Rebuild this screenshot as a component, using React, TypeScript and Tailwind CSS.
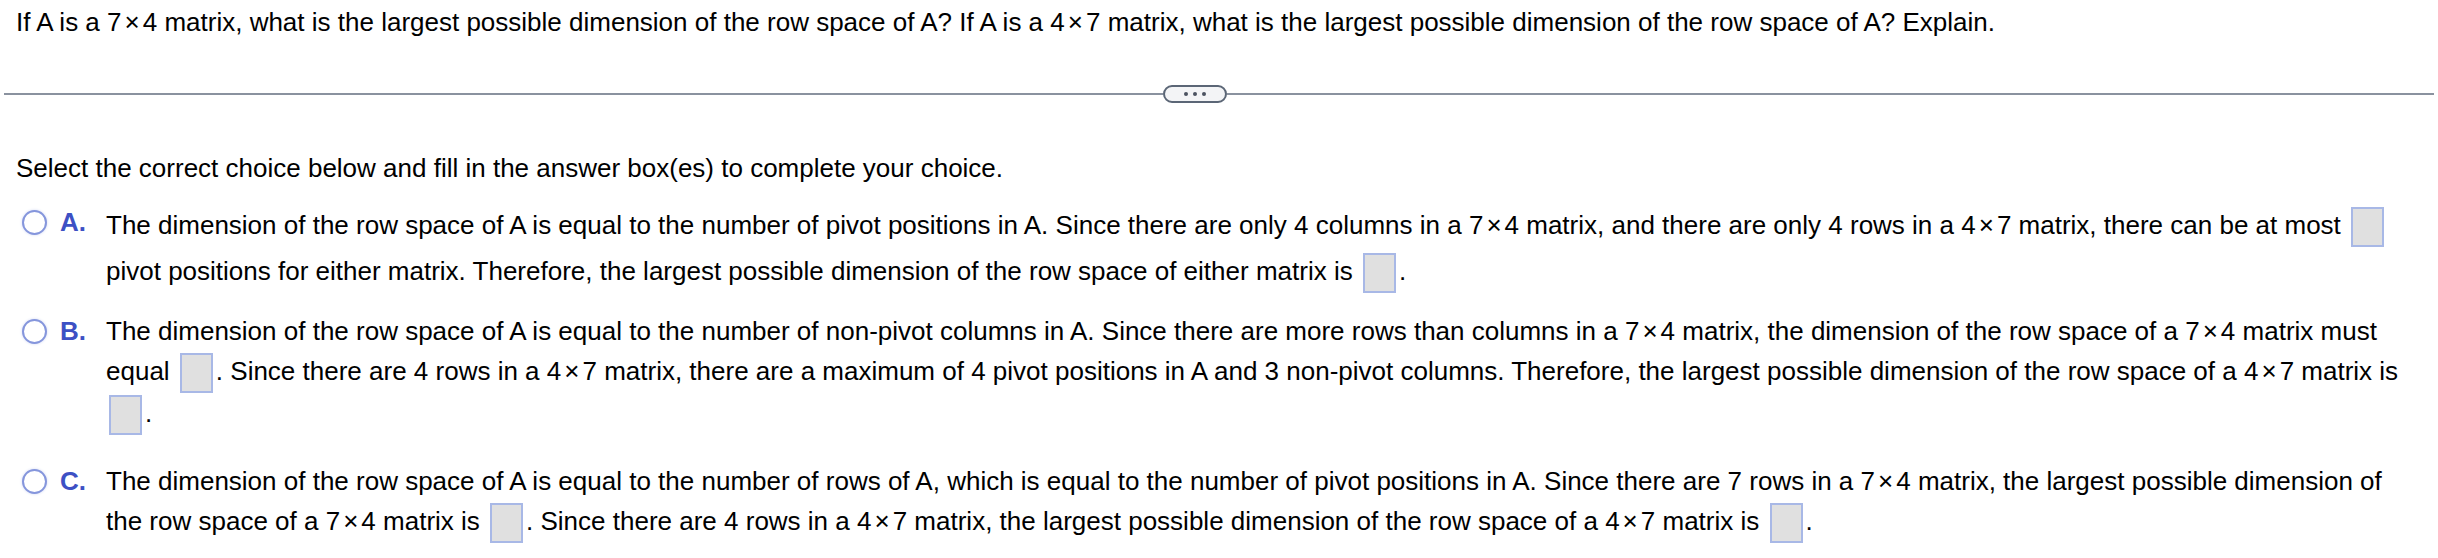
import React from "react";

function AnswerBox() {
  return (
    <span className="inline-block w-[33px] h-[40px] align-middle border-2 border-[#a8b8e6] bg-[#e0e0e0] mx-[3px]" />
  );
}

// matrix size like 7×4, with a little room round the times sign
function Dim({ r, c }: { r: number; c: number }) {
  return (
    <>
      {r}
      <span className="mx-[3px]">×</span>
      {c}
    </>
  );
}

function Radio() {
  return (
    <span className="block w-[25px] h-[25px] rounded-full border-2 border-[#8596dc] bg-white shadow-[0_0_3px_#d3d9f3]" />
  );
}

interface ChoiceProps {
  letter: string;
  lines: React.ReactNode[];
  className?: string;
  leading?: string;
}

function Choice({ letter, lines, className = "", leading = "leading-[40px]" }: ChoiceProps) {
  return (
    <div className={`flex ${className}`}>
      <div className={`flex items-center w-[106px] shrink-0 h-[40px] ${leading}`}>
        <div className="w-[22px]" />
        <Radio />
        <span className="ml-[13px] font-bold text-[#3d50c4]">{letter}.</span>
      </div>
      <div className={`${leading}`}>
        {lines.map((line, i) => (
          <div key={i} className="whitespace-nowrap">
            {line}
          </div>
        ))}
      </div>
    </div>
  );
}

export default function App() {
  return (
    <div className="w-[2438px] h-[558px] bg-white text-black text-[26px] font-['Liberation_Sans',Arial,sans-serif] overflow-hidden">
      <p className="pl-4 pt-[7px] leading-[30px] whitespace-nowrap">
        If A is a <Dim r={7} c={4} /> matrix, what is the largest possible dimension of the row space of A? If A is a{" "}
        <Dim r={4} c={7} /> matrix, what is the largest possible dimension of the row space of A? Explain.
      </p>

      <div className="flex items-center mt-[48px] px-[4px]">
        <div className="w-[1159px] h-[2px] bg-[#8a929f]" />
        <div className="flex items-center justify-center gap-[5px] w-[64px] h-[18px] rounded-full border-2 border-[#5b6676] bg-[#f3f4f6]">
          <span className="w-[4px] h-[4px] rounded-full bg-[#4b5260]" />
          <span className="w-[4px] h-[4px] rounded-full bg-[#4b5260]" />
          <span className="w-[4px] h-[4px] rounded-full bg-[#4b5260]" />
        </div>
        <div className="flex-1 h-[2px] bg-[#8a929f]" />
      </div>

      <p className="pl-4 mt-[50px] leading-[30px]">
        Select the correct choice below and fill in the answer box(es) to complete your choice.
      </p>

      <Choice
        letter="A"
        className="mt-[19px]"
        leading="leading-[46px]"
        lines={[
          <>
            The dimension of the row space of A is equal to the number of pivot positions in A. Since there are only 4
            columns in a <Dim r={7} c={4} /> matrix, and there are only 4 rows in a <Dim r={4} c={7} /> matrix, there can
            be at most <AnswerBox />
          </>,
          <>
            pivot positions for either matrix. Therefore, the largest possible dimension of the row space of either matrix
            is <AnswerBox />.
          </>,
        ]}
      />

      <Choice
        letter="B"
        className="mt-[17px]"
        lines={[
          <>
            The dimension of the row space of A is equal to the number of non-pivot columns in A. Since there are more rows
            than columns in a <Dim r={7} c={4} /> matrix, the dimension of the row space of a <Dim r={7} c={4} /> matrix
            must
          </>,
          <>
            equal <AnswerBox />. Since there are 4 rows in a <Dim r={4} c={7} /> matrix, there are a maximum of 4 pivot
            positions in A and 3 non-pivot columns. Therefore, the largest possible dimension of the row space of a{" "}
            <Dim r={4} c={7} /> matrix is
          </>,
          <>
            <AnswerBox />.
          </>,
        ]}
      />

      <Choice
        letter="C"
        className="mt-[26px]"
        lines={[
          <>
            The dimension of the row space of A is equal to the number of rows of A, which is equal to the number of pivot
            positions in A. Since there are 7 rows in a <Dim r={7} c={4} /> matrix, the largest possible dimension of
          </>,
          <>
            the row space of a <Dim r={7} c={4} /> matrix is <AnswerBox />. Since there are 4 rows in a{" "}
            <Dim r={4} c={7} /> matrix, the largest possible dimension of the row space of a <Dim r={4} c={7} /> matrix
            is <AnswerBox />.
          </>,
        ]}
      />
    </div>
  );
}
